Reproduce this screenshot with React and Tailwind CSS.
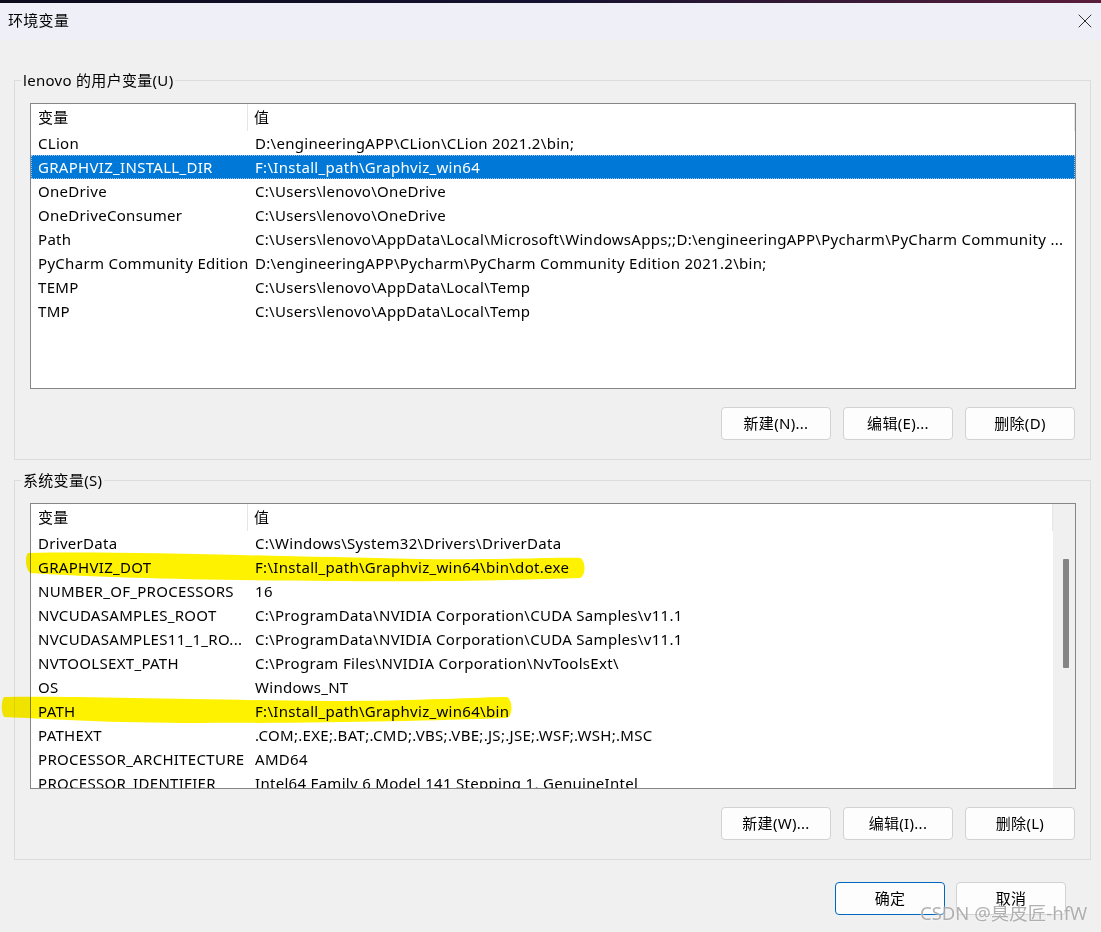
import { X } from 'lucide-react';

const USER_VARS = [
  ['CLion', 'D:\\engineeringAPP\\CLion\\CLion 2021.2\\bin;'],
  ['GRAPHVIZ_INSTALL_DIR', 'F:\\Install_path\\Graphviz_win64'],
  ['OneDrive', 'C:\\Users\\lenovo\\OneDrive'],
  ['OneDriveConsumer', 'C:\\Users\\lenovo\\OneDrive'],
  ['Path', 'C:\\Users\\lenovo\\AppData\\Local\\Microsoft\\WindowsApps;;D:\\engineeringAPP\\Pycharm\\PyCharm Community ...'],
  ['PyCharm Community Edition', 'D:\\engineeringAPP\\Pycharm\\PyCharm Community Edition 2021.2\\bin;'],
  ['TEMP', 'C:\\Users\\lenovo\\AppData\\Local\\Temp'],
  ['TMP', 'C:\\Users\\lenovo\\AppData\\Local\\Temp'],
];

const SYSTEM_VARS = [
  ['DriverData', 'C:\\Windows\\System32\\Drivers\\DriverData'],
  ['GRAPHVIZ_DOT', 'F:\\Install_path\\Graphviz_win64\\bin\\dot.exe'],
  ['NUMBER_OF_PROCESSORS', '16'],
  ['NVCUDASAMPLES_ROOT', 'C:\\ProgramData\\NVIDIA Corporation\\CUDA Samples\\v11.1'],
  ['NVCUDASAMPLES11_1_RO...', 'C:\\ProgramData\\NVIDIA Corporation\\CUDA Samples\\v11.1'],
  ['NVTOOLSEXT_PATH', 'C:\\Program Files\\NVIDIA Corporation\\NvToolsExt\\'],
  ['OS', 'Windows_NT'],
  ['PATH', 'F:\\Install_path\\Graphviz_win64\\bin'],
  ['PATHEXT', '.COM;.EXE;.BAT;.CMD;.VBS;.VBE;.JS;.JSE;.WSF;.WSH;.MSC'],
  ['PROCESSOR_ARCHITECTURE', 'AMD64'],
  ['PROCESSOR_IDENTIFIER', 'Intel64 Family 6 Model 141 Stepping 1, GenuineIntel'],
];

function WinButton({ children, primary }) {
  return (
    <button
      className={
        primary
          ? 'w-[110px] h-[33px] rounded-[4px] border border-[#0067c0] bg-[#fdfdfd] text-[15px] leading-none'
          : 'w-[110px] h-[33px] rounded-[4px] border border-[#d2d2d2] bg-[#fdfdfd] text-[15px] leading-none'
      }
    >
      {children}
    </button>
  );
}

function VarList({ rows, selected, scrollbar }) {
  return (
    <div className="h-[286px] border border-[#868686] bg-white flex overflow-hidden">
      <div className="flex-1 min-w-0 overflow-hidden">
        <div className="h-[27px] flex items-center">
          <div className="w-[217px] h-full flex items-center pl-[7px] border-r border-[#e5e5e5]">变量</div>
          <div className="flex-1 h-full flex items-center pl-[6px] border-r border-[#e5e5e5]">值</div>
        </div>
        {rows.map(([name, value], i) => (
          <div
            key={name}
            className={
              i === selected
                ? 'h-[24px] flex items-center bg-[#0078d7] text-white outline outline-1 outline-dotted outline-[#9cc3ec] -outline-offset-1'
                : 'h-[24px] flex items-center'
            }
          >
            <div className="w-[224px] shrink-0 pl-[7px] whitespace-nowrap overflow-hidden">{name}</div>
            <div className="flex-1 whitespace-nowrap overflow-hidden">{value}</div>
          </div>
        ))}
      </div>
      {scrollbar && (
        <div className="w-[22px] shrink-0 bg-[#f0f0f0] pt-[55px] flex justify-center">
          <div className="w-[6px] h-[109px] bg-[#858585] rounded-[1px] ml-[3px]" />
        </div>
      )}
    </div>
  );
}

function Group({ title, children }) {
  return (
    <fieldset className="ml-[14px] w-[1077px] border border-[#dcdcdc] p-0">
      <legend className="ml-[6px] px-[2px] h-[20px] leading-[20px]">{title}</legend>
      <div className="pl-[15px] pr-[14px] pt-[13px] pb-[19px]">{children}</div>
    </fieldset>
  );
}

export default function App() {
  return (
    <div className="relative w-[1101px] h-[932px] overflow-hidden bg-[#f0f0f0] text-black text-[15px] tracking-[0.3px] font-['Noto_Sans','Noto_Sans_CJK_SC',sans-serif]">
      <div className="h-[3px] bg-gradient-to-r from-[#0c0b1c] via-[#141230] to-[#5a1c3a]" />
      <div className="h-[37px] bg-[#eff0f7] flex items-center justify-between pl-[8px] pr-[4px]">
        <span className="-mt-[3px]">环境变量</span>
        <X size={24} strokeWidth={0.9} className="text-[#1a1a1a] -mt-[1px]" />
      </div>

      <div className="mt-[30px]">
        <Group title="lenovo 的用户变量(U)">
          <VarList rows={USER_VARS} selected={1} />
          <div className="mt-[18px] flex justify-end gap-[12px] pr-[1px]">
            <WinButton>新建(N)...</WinButton>
            <WinButton>编辑(E)...</WinButton>
            <WinButton>删除(D)</WinButton>
          </div>
        </Group>
      </div>

      <div className="mt-[10px]">
        <Group title="系统变量(S)">
          <VarList rows={SYSTEM_VARS} selected={-1} scrollbar />
          <div className="mt-[18px] flex justify-end gap-[12px] pr-[1px]">
            <WinButton>新建(W)...</WinButton>
            <WinButton>编辑(I)...</WinButton>
            <WinButton>删除(L)</WinButton>
          </div>
        </Group>
      </div>

      <div className="mt-[22px] flex justify-end gap-[11px] pr-[35px]">
        <WinButton primary>确定</WinButton>
        <WinButton>取消</WinButton>
      </div>

      {/* yellow marker strokes drawn over the list */}
      <svg
        className="absolute left-0 top-0 pointer-events-none mix-blend-multiply"
        width="1101"
        height="932"
        viewBox="0 0 1101 932"
      >
        <path
          d="M28 553 C120 551 260 556 420 559 C500 560 560 557 580 558 C586 560 586 576 580 578 C520 580 440 582 330 581 C200 580 110 578 30 573 C25 568 25 556 28 553 Z"
          fill="#fff200"
        />
        <path
          d="M4 697 C80 696 200 700 330 701 C420 701 480 697 507 697 C513 700 513 716 507 718 C420 721 330 723 200 723 C110 723 50 719 4 717 C1 712 1 701 4 697 Z"
          fill="#fff200"
        />
      </svg>

      <div className="absolute left-[920px] top-[899px] text-[18.5px] tracking-normal text-[#a9a9a9] opacity-90 [text-shadow:0_0_2px_#fff] whitespace-nowrap">
        CSDN @臭皮匠-hfW
      </div>
    </div>
  );
}
